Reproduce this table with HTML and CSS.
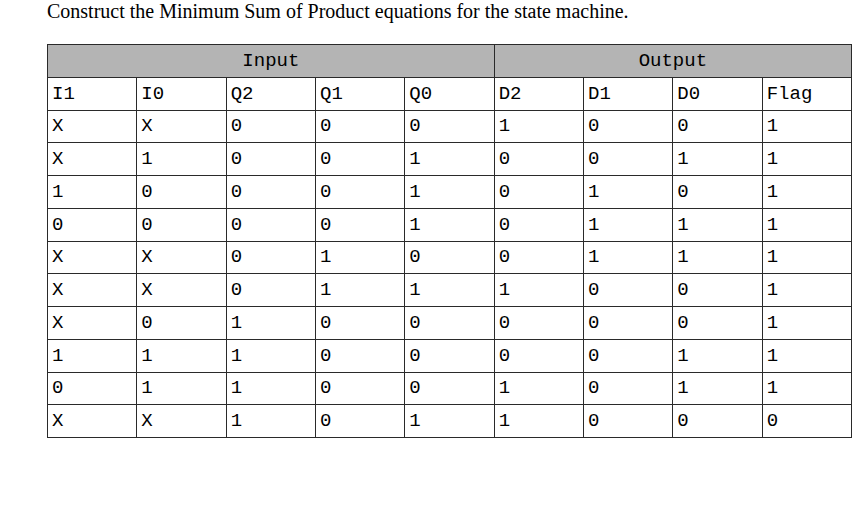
FILE: index.html
```html
<!DOCTYPE html>
<html>
<head>
<meta charset="utf-8">
<link rel="stylesheet" href="styles.css">
</head>
<body>
<p class="title">Construct the Minimum Sum of Product equations for the state machine.</p>
<table class="truth">
  <colgroup>
    <col><col><col><col><col><col><col><col><col>
  </colgroup>
  <tr class="group">
    <th colspan="5">Input</th>
    <th colspan="4">Output</th>
  </tr>
  <tr>
    <td>I1</td><td>I0</td><td>Q2</td><td>Q1</td><td>Q0</td><td>D2</td><td>D1</td><td>D0</td><td>Flag</td>
  </tr>
  <tr><td>X</td><td>X</td><td>0</td><td>0</td><td>0</td><td>1</td><td>0</td><td>0</td><td>1</td></tr>
  <tr><td>X</td><td>1</td><td>0</td><td>0</td><td>1</td><td>0</td><td>0</td><td>1</td><td>1</td></tr>
  <tr><td>1</td><td>0</td><td>0</td><td>0</td><td>1</td><td>0</td><td>1</td><td>0</td><td>1</td></tr>
  <tr><td>0</td><td>0</td><td>0</td><td>0</td><td>1</td><td>0</td><td>1</td><td>1</td><td>1</td></tr>
  <tr><td>X</td><td>X</td><td>0</td><td>1</td><td>0</td><td>0</td><td>1</td><td>1</td><td>1</td></tr>
  <tr><td>X</td><td>X</td><td>0</td><td>1</td><td>1</td><td>1</td><td>0</td><td>0</td><td>1</td></tr>
  <tr><td>X</td><td>0</td><td>1</td><td>0</td><td>0</td><td>0</td><td>0</td><td>0</td><td>1</td></tr>
  <tr><td>1</td><td>1</td><td>1</td><td>0</td><td>0</td><td>0</td><td>0</td><td>1</td><td>1</td></tr>
  <tr><td>0</td><td>1</td><td>1</td><td>0</td><td>0</td><td>1</td><td>0</td><td>1</td><td>1</td></tr>
  <tr><td>X</td><td>X</td><td>1</td><td>0</td><td>1</td><td>1</td><td>0</td><td>0</td><td>0</td></tr>
</table>
</body>
</html>
```
FILE: styles.css
```css
html, body {
  margin: 0;
  padding: 0;
  background: #fff;
}
body {
  padding: 0 0 0 47px;
}
.title {
  margin: 0;
  padding-top: 0;
  font-family: "Liberation Serif", serif;
  font-size: 20px;
  line-height: 22px;
  color: #000;
}
.truth {
  margin-top: 22px;
  border-collapse: collapse;
  table-layout: fixed;
  width: 804px;
  font-family: "Liberation Mono", monospace;
  font-size: 19px;
  color: #000;
}
.truth col {
  width: 89.33px;
}
.truth tr {
  height: 32.75px;
}
.truth th,
.truth td {
  border: 1px solid #2a2a2a;
  padding: 0 0 0 4px;
  text-align: left;
  vertical-align: middle;
  font-weight: normal;
  white-space: nowrap;
}
.truth .group th {
  background: #b4b4b4;
  text-align: center;
  padding: 0;
}
```
